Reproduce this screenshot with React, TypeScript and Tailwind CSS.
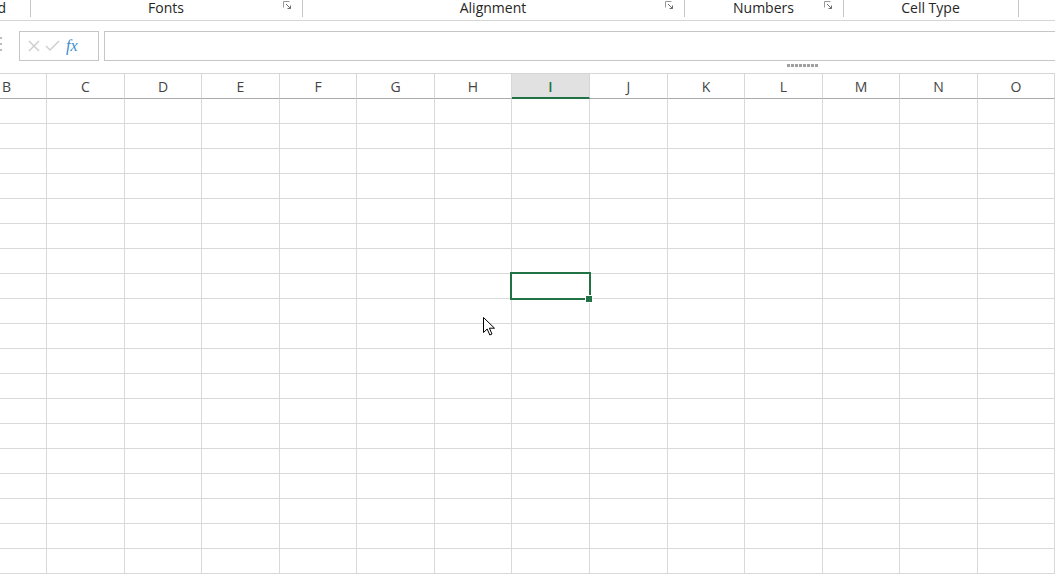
import React from "react";

const cols = [
  { l: "B", w: 47 },
  { l: "C", w: 78 },
  { l: "D", w: 77 },
  { l: "E", w: 78 },
  { l: "F", w: 77 },
  { l: "G", w: 78 },
  { l: "H", w: 77 },
  { l: "I", w: 78 },
  { l: "J", w: 78 },
  { l: "K", w: 77 },
  { l: "L", w: 78 },
  { l: "M", w: 77 },
  { l: "N", w: 78 },
  { l: "O", w: 77 },
];

const template = cols.map((c) => `${c.w}px`).join(" ") + " 1fr";

function Launcher() {
  return (
    <svg width="8" height="8" viewBox="0 0 8 8" className="absolute">
      <path d="M0.5 0.5H6.5M0.5 0.5V6.5" stroke="#9a9a9a" strokeWidth="1" fill="none" />
      <path d="M3 3L7.5 7.5M7.5 4.5V7.5H4.5" stroke="#6d6d6d" strokeWidth="1" fill="none" />
    </svg>
  );
}

function Group({ label, width, launcher, first }: { label: string; width: number | string; launcher?: boolean; first?: boolean }) {
  return (
    <div
      className={`relative h-[20px] shrink-0 flex items-start ${first ? "justify-end overflow-hidden" : "justify-center"}`}
      style={{ width }}
    >
      <span className={`leading-[16px] text-[14px] text-[#262626] whitespace-nowrap ${first ? "mr-[24px]" : ""}`}>{label}</span>
      {!first && <div className="absolute left-0 top-0 h-[17px] w-px bg-[#c6c6c6]" />}
      {launcher && (
        <div className="absolute right-[11px] top-[1px] w-[8px] h-[8px]">
          <Launcher />
        </div>
      )}
    </div>
  );
}

export default function App() {
  const rows = Array.from({ length: 19 });
  return (
    <div
      className="relative w-[1055px] h-[575px] overflow-hidden bg-white"
      style={{ fontFamily: "'Segoe UI', 'Open Sans', 'Noto Sans', sans-serif" }}
    >
      {/* ribbon group labels */}
      <div className="flex h-[21px] border-b border-[#d5d5d5]">
        <Group label="Clipboard" width={30} first />
        <Group label="Fonts" width={272} launcher />
        <Group label="Alignment" width={382} launcher />
        <Group label="Numbers" width={159} launcher />
        <Group label="Cell Type" width={175} />
        <Group label="" width={37} />
      </div>

      {/* formula bar */}
      <div className="relative flex items-start h-[40px] pt-[10px]">
        <div className="absolute left-0 top-[16px] flex flex-col gap-[4px]">
          <div className="w-[2px] h-[2px] bg-[#bdbdbd]" />
          <div className="w-[2px] h-[2px] bg-[#bdbdbd]" />
          <div className="w-[2px] h-[2px] bg-[#bdbdbd]" />
        </div>
        <div className="ml-[19px] w-[80px] h-[30px] border border-[#c6c6c6] flex items-center pl-[8px] gap-[3px]">
          <svg width="12" height="12" viewBox="0 0 12 12">
            <path d="M1 1L11 11M11 1L1 11" stroke="#cfcfcf" strokeWidth="1.5" />
          </svg>
          <svg width="15" height="12" viewBox="0 0 15 12" className="ml-[2px]">
            <path d="M1 6L5 10L14 1" stroke="#cfcfcf" strokeWidth="1.5" fill="none" />
          </svg>
          <span
            className="ml-[3px] text-[16px] italic text-[#3a8ccf] leading-none"
            style={{ fontFamily: "'Liberation Serif', 'DejaVu Serif', serif" }}
          >
            fx
          </span>
        </div>
        <div className="ml-[5px] flex-1 h-[30px] border border-[#c6c6c6] -mr-[10px]" />
      </div>

      {/* splitter handle */}
      <div className="relative h-[12px]">
        <div className="absolute left-[787px] top-[3px] flex gap-[1px]">
          {Array.from({ length: 8 }).map((_, i) => (
            <div key={i} className="w-[3px] h-[3px] bg-[#a0a0a0]" />
          ))}
        </div>
      </div>

      {/* grid */}
      <div className="relative border-t border-[#d5d5d5]">
        <div className="grid" style={{ gridTemplateColumns: template }}>
          {cols.map((c) => (
            <div
              key={c.l}
              className={`h-[25px] border-r flex items-center justify-center text-[14px] ${
                c.l === "I"
                  ? "bg-[#e1e1e1] border-[#d5d5d5] border-b-2 border-b-[#217346] text-[#217346] font-semibold"
                  : "border-[#d8d8d8] border-b border-b-[#ababab] text-[#444]"
              } ${c.l === "B" ? "justify-start pl-[2px]" : ""}`}
            >
              <span className={c.l === "I" ? "mt-[1px]" : ""}>{c.l}</span>
            </div>
          ))}
          <div className="h-[25px] border-b border-[#ababab]" />
        </div>
        <div className="grid" style={{ gridTemplateColumns: template }}>
          {rows.map((_, r) => (
            <React.Fragment key={r}>
              {cols.map((c) => (
                <div key={c.l} className="h-[25px] border-r border-b border-[#d9d9d9]" />
              ))}
              <div className="h-[25px] border-b border-[#d9d9d9]" />
            </React.Fragment>
          ))}
        </div>

        {/* selected cell */}
        <div className="absolute left-[510px] top-[198px] w-[81px] h-[28px] border-2 border-[#217346]" />
        <div className="absolute left-[585px] top-[221px] w-[8px] h-[8px] bg-white" />
        <div className="absolute left-[586px] top-[222px] w-[6px] h-[6px] bg-[#217346]" />

        {/* mouse cursor */}
        <svg
          className="absolute left-[483px] top-[243px]"
          width="14"
          height="20"
          viewBox="0 0 14 20"
        >
          <path
            d="M0.5 0.5V15.5L4.2 12L6.8 18L9 17L6.4 11.2H11.5Z"
            fill="white"
            stroke="black"
            strokeWidth="1"
            strokeLinejoin="round"
          />
        </svg>
      </div>
    </div>
  );
}
